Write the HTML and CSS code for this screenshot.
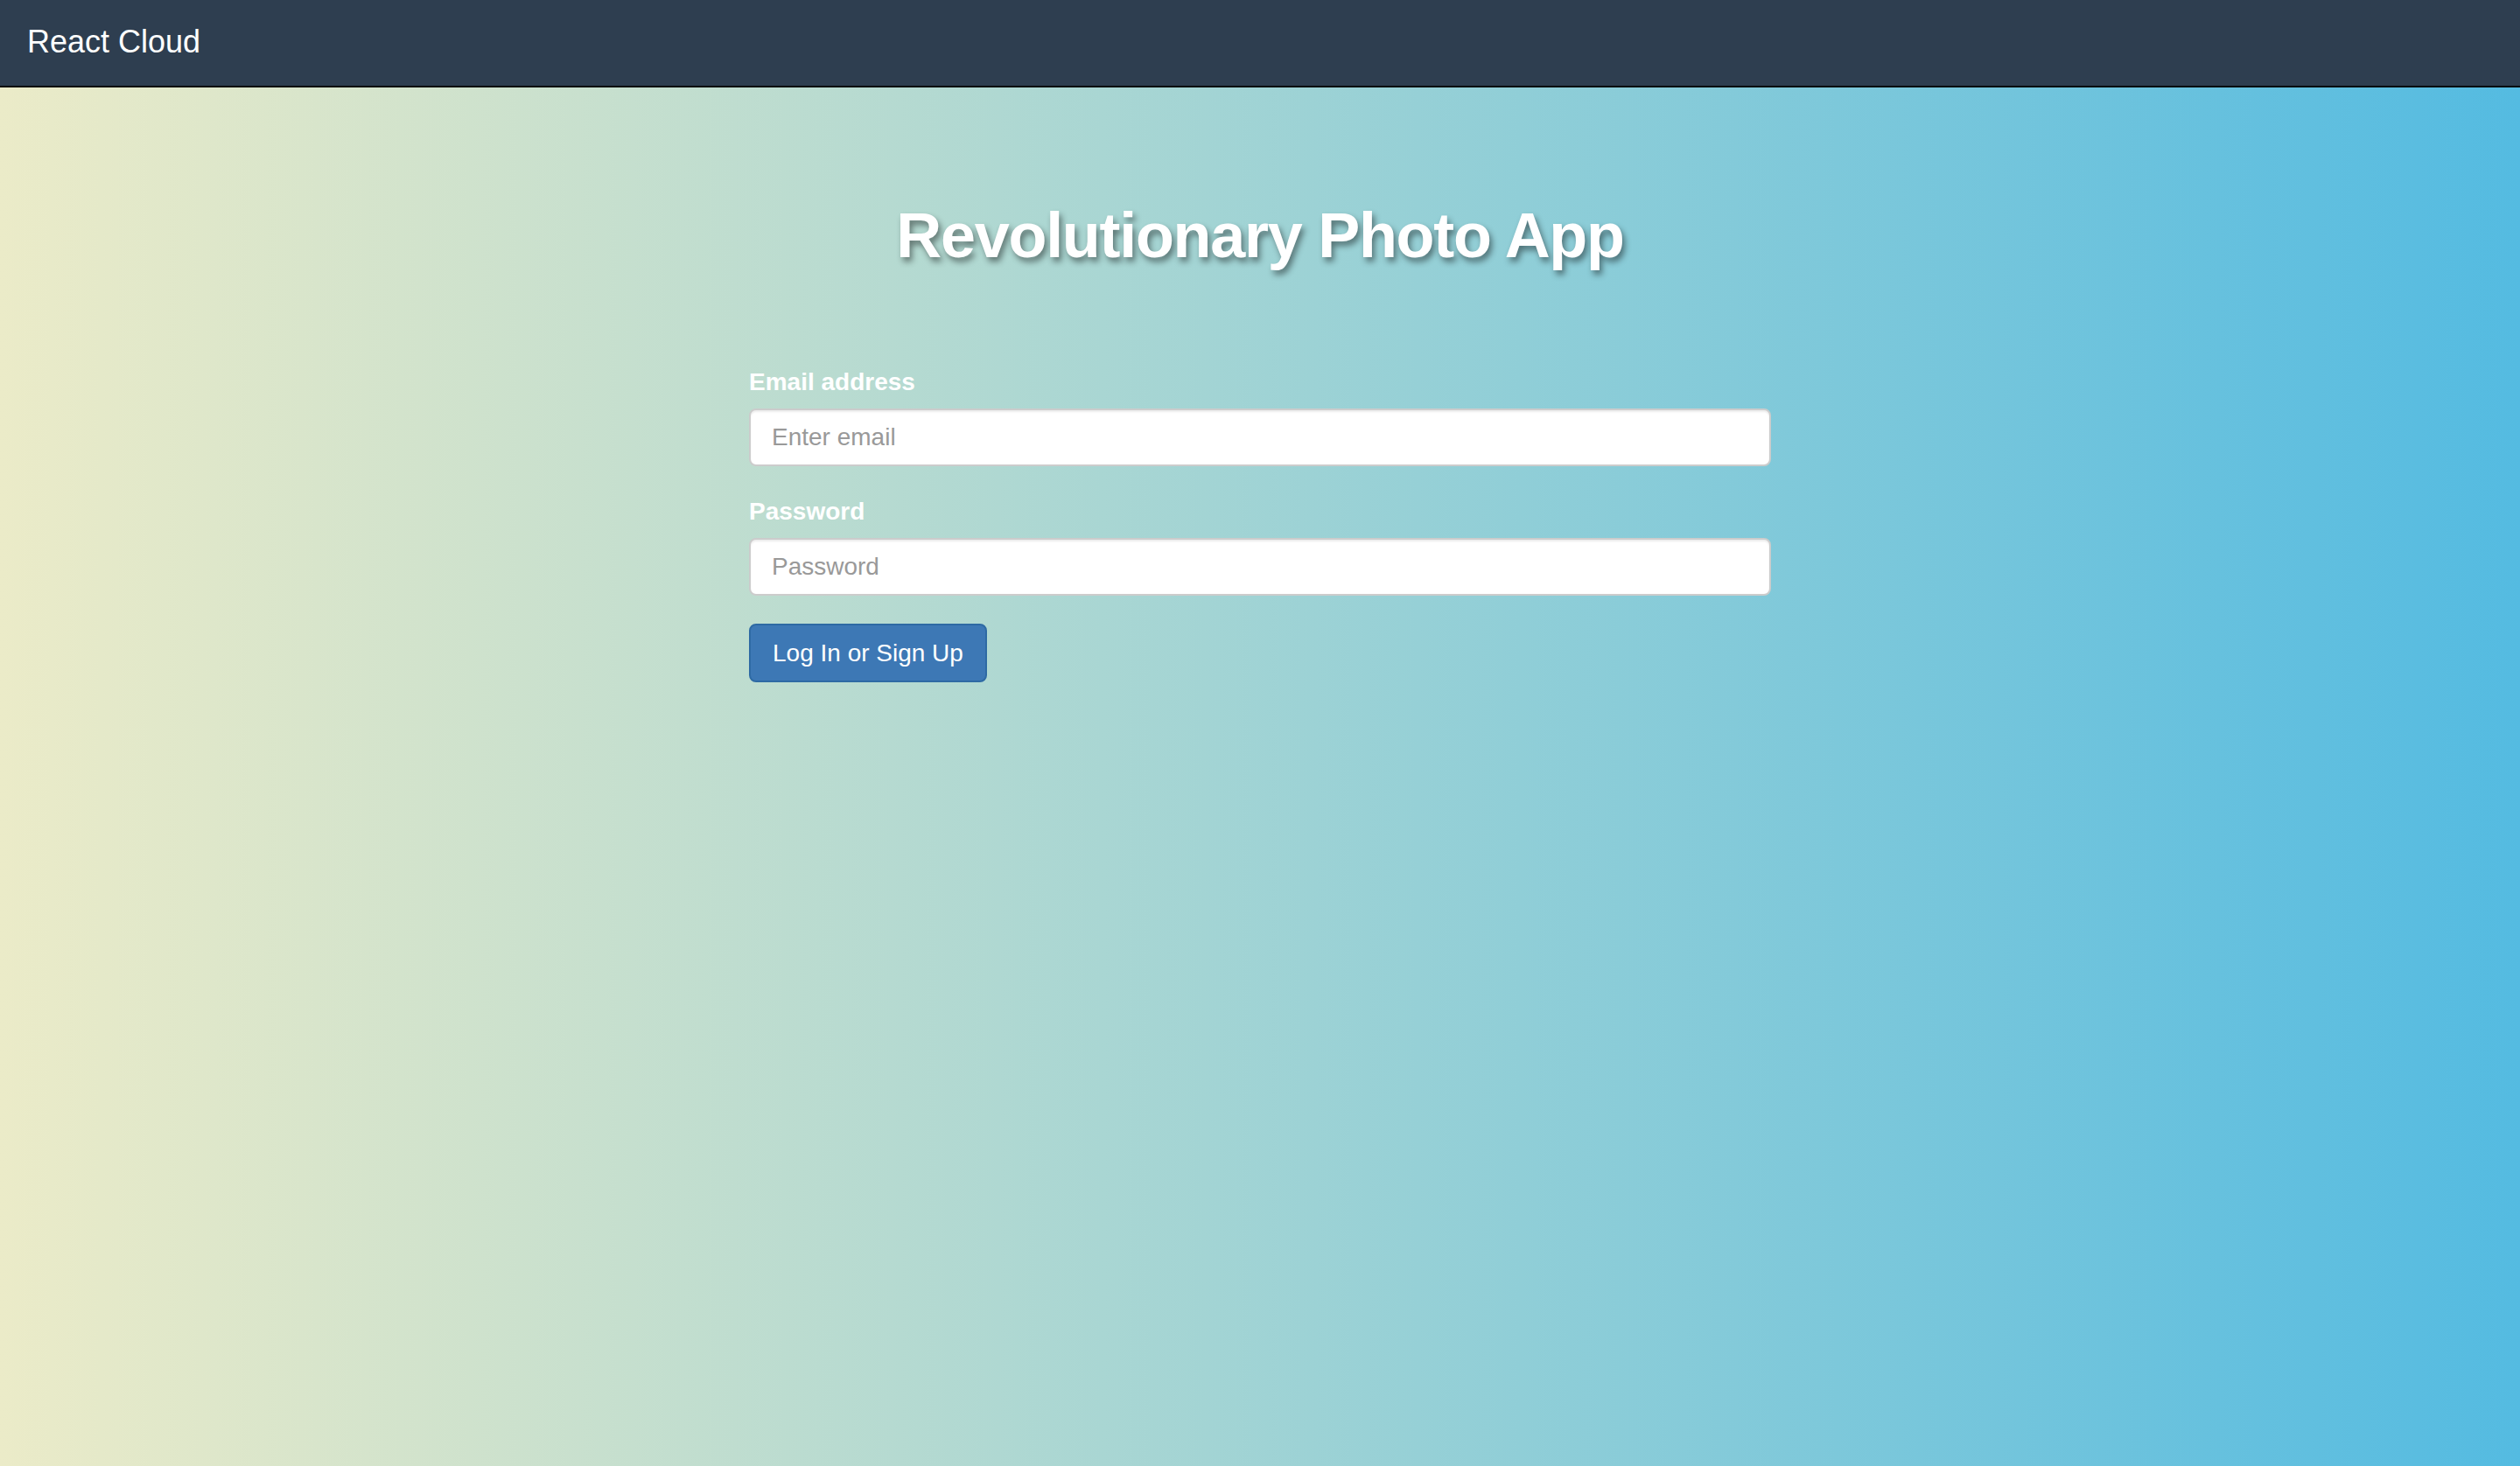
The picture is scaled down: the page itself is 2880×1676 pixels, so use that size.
FILE: index.html
```html
<!DOCTYPE html>
<html lang="en">
<head>
    <meta charset="UTF-8">
    <meta name="viewport" content="width=device-width, initial-scale=1.0">
    <title>React Cloud</title>
    <link rel="stylesheet" href="styles.css">
</head>
<body>

    <nav class="navbar">
        <a class="navbar-brand" href="#">React Cloud</a>
    </nav>

    <div class="container">
        <h1 class="title">Revolutionary Photo App</h1>

        <form class="login-form">
            <div class="form-group">
                <label for="email">Email address</label>
                <input type="email" id="email" class="form-control" placeholder="Enter email">
            </div>
            <div class="form-group">
                <label for="password">Password</label>
                <input type="password" id="password" class="form-control" placeholder="Password">
            </div>
            <button type="submit" class="btn-primary">Log In or Sign Up</button>
        </form>
    </div>

</body>
</html>
```

FILE: styles.css
```css
html,
body {
    margin: 0;
    min-height: 100%;
}

body {
    font-family: "Liberation Sans", Arial, sans-serif;
    background: linear-gradient(to right, #ebebc8, #54bbe1);
    min-height: 1676px;
    color: #fff;
}

.navbar {
    height: 98px;
    background-color: #2e3e50;
    border-bottom: 2px solid #080808;
    box-sizing: content-box;
}

.navbar-brand {
    display: inline-block;
    padding: 28px 30px 0 31px;
    font-size: 36px;
    line-height: 40px;
    color: #fff;
    text-decoration: none;
}

.container {
    width: 1168px;
    margin: 0 auto;
}

.title {
    margin: 130px 0 108px;
    font-size: 72px;
    line-height: 79px;
    font-weight: bold;
    letter-spacing: -1.3px;
    text-align: center;
    color: #fff;
    text-shadow: 3px 5px 7px rgba(0, 0, 0, 0.45);
}

.form-group {
    margin-bottom: 32px;
}

label {
    display: block;
    margin-bottom: 10px;
    font-size: 28px;
    line-height: 40px;
    font-weight: bold;
    color: #fff;
}

.form-control {
    display: block;
    width: 100%;
    height: 66px;
    box-sizing: border-box;
    padding: 12px 24px;
    font-family: "Liberation Sans", Arial, sans-serif;
    font-size: 28px;
    color: #555;
    background-color: #fff;
    border: 2px solid #ccc;
    border-radius: 8px;
    box-shadow: inset 0 2px 2px rgba(0, 0, 0, 0.075);
    outline: none;
}

.form-control::placeholder {
    color: #999;
}

.btn-primary {
    height: 67px;
    padding: 0 25px;
    font-family: "Liberation Sans", Arial, sans-serif;
    font-size: 28px;
    line-height: 40px;
    color: #fff;
    background-color: #3d78b5;
    border: 2px solid #2e6aa4;
    border-radius: 8px;
    cursor: pointer;
}

.btn-primary:hover {
    background-color: #286090;
}
```
